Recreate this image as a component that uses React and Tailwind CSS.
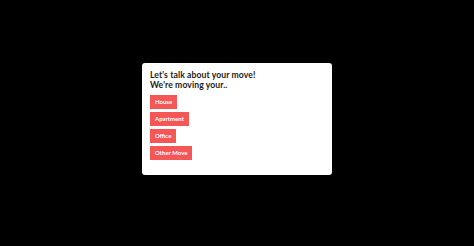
import React from "react";

const options = ["House", "Apartment", "Office", "Other Move"];

export default function App() {
  return (
    <div className="w-[474px] h-[246px] bg-black flex items-start justify-center pt-[63px]" style={{ fontFamily: "Lato, 'Noto Sans', sans-serif" }}>
      <div className="w-[190px] h-[112px] bg-white rounded-[3px] pt-[8px] pl-[8px]">
        <h2 className="text-[8.6px] leading-[9.5px] font-bold text-[#1a1a1a] tracking-[0.1px]">
          Let's talk about your move!
          <br />
          We're moving your..
        </h2>
        <div className="flex flex-col items-start gap-[3px] mt-[5px]">
          {options.map((o) => (
            <button
              key={o}
              className="h-[14px] px-[5px] bg-[#f55757] text-white text-[6px] font-bold leading-none"
            >
              {o}
            </button>
          ))}
        </div>
      </div>
    </div>
  );
}
